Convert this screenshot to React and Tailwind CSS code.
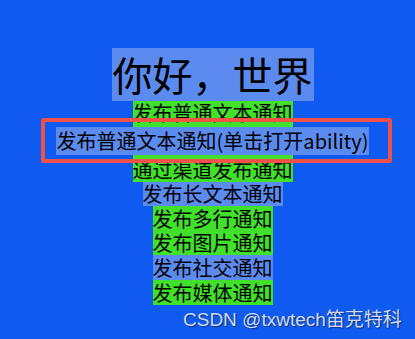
export default function App() {
  const font = { fontFamily: '"Noto Sans CJK SC", "Noto Sans", sans-serif' };

  return (
    <main
      className="relative w-[415px] h-[339px] overflow-hidden bg-[#0f5bf2] flex flex-col items-center pt-[48px] pl-[10px] text-black"
      style={font}
    >
      <h1 className="h-[53px] px-[1px] bg-[#5c8bf0] text-[40px] leading-[53px] font-normal whitespace-nowrap">
        你好，世界
      </h1>

      <div className="h-[29px] bg-[#41e02b] text-[20px] leading-[24px] whitespace-nowrap">
        发布普通文本通知
      </div>

      <div className="relative z-10 -my-[3px]">
        <div className="h-[28px] px-[1px] bg-[#5c8bf0] text-[20px] leading-[28px] whitespace-nowrap">
          发布普通文本通知(单击打开ability)
        </div>
        <div className="absolute -left-[15px] -right-[23px] -top-[9px] -bottom-[8px] border-[4px] border-[#f0524a] rounded-[3px]"></div>
      </div>

      <div className="h-[30px] bg-[#41e02b] text-[20px] leading-[25px] pt-[5px] whitespace-nowrap">
        通过渠道发布通知
      </div>
      <div className="h-[24px] bg-[#5c8bf0] text-[20px] leading-[24px] whitespace-nowrap">
        发布长文本通知
      </div>
      <div className="h-[25px] bg-[#41e02b] text-[20px] leading-[25px] whitespace-nowrap">
        发布多行通知
      </div>
      <div className="h-[24px] bg-[#41e02b] text-[20px] leading-[24px] whitespace-nowrap">
        发布图片通知
      </div>
      <div className="h-[25px] bg-[#5c8bf0] text-[20px] leading-[25px] whitespace-nowrap">
        发布社交通知
      </div>
      <div className="h-[25px] bg-[#41e02b] text-[20px] leading-[25px] whitespace-nowrap">
        发布媒体通知
      </div>

      <div
        className="absolute left-[183px] top-[308px] text-[19px] leading-[24px] text-[#d3d9e8] whitespace-nowrap [text-shadow:1px_1px_1px_rgba(0,0,0,0.45)]"
        style={{ fontFamily: '"Liberation Sans", "Noto Sans CJK SC", sans-serif' }}
      >
        CSDN @txwtech笛克特科
      </div>
    </main>
  );
}
